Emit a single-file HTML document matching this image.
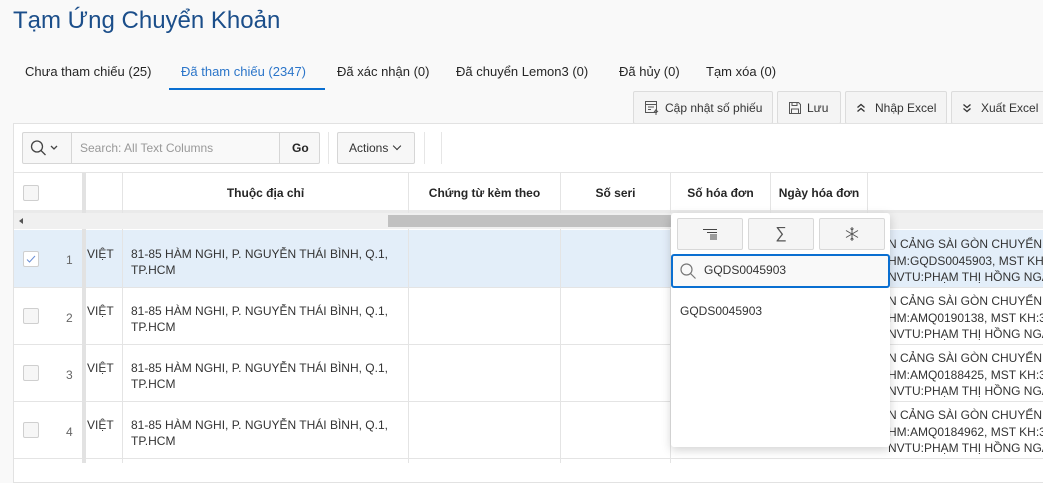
<!DOCTYPE html>
<html><head><meta charset="utf-8"><style>
*{box-sizing:border-box;margin:0;padding:0}
body{width:1043px;height:463px;overflow:hidden;background:#f9f9f9;font-family:"Liberation Sans","DejaVu Sans",sans-serif;color:#262626;position:relative}
.a{position:absolute}
.t{font-size:13px;white-space:nowrap}
.btn{position:absolute;top:91px;height:33px;background:#f4f4f4;border:1px solid #dcdcdc;border-radius:2px;font-size:12px;color:#333;display:flex;align-items:center;padding-left:10px;gap:5px}
.th{position:absolute;top:172px;height:41px;font-size:12px;font-weight:bold;display:flex;align-items:center;justify-content:center;border-right:1px solid #e4e4e4}
.row{position:absolute;left:14px;width:1029px;border-bottom:1px solid #e4e4e4}
.cb{position:absolute;left:9px;width:16px;height:16px;border:1px solid #cfcfcf;border-radius:2px;background:#f6f6f6}
.pb{position:absolute;top:218px;height:32px;width:66px;background:#f5f5f5;border:1px solid #d8d8d8;border-radius:2px;display:flex;align-items:center;justify-content:center;color:#555}
.rt{position:absolute;left:888px;line-height:16.5px;white-space:nowrap;font-size:12px}
</style></head><body>
<div class="a" style="left:13px;top:7px;font-size:24px;color:#1b4e8a">Tạm Ứng Chuyển Khoản</div>
<div class="a t" style="left:25px;top:64px">Chưa tham chiếu (25)</div>
<div class="a t" style="left:181px;top:64px;color:#2b75c9">Đã tham chiếu (2347)</div>
<div class="a" style="left:169px;top:88px;width:156px;height:2px;background:#0a6fd1"></div>
<div class="a t" style="left:337px;top:64px">Đã xác nhận (0)</div>
<div class="a t" style="left:456px;top:64px">Đã chuyển Lemon3 (0)</div>
<div class="a t" style="left:619px;top:64px">Đã hủy (0)</div>
<div class="a t" style="left:706px;top:64px">Tạm xóa (0)</div>

<div class="btn" style="left:633px;width:140px"><svg width="16" height="16" viewBox="0 0 16 16" fill="none" stroke="#555"><rect x="1.5" y="1.5" width="11" height="11"/><path d="M1.5 4.5h11M4 7h6M4 9.5h3M12 9v6M10 12l2-2 2 2"/></svg>Cập nhật số phiếu</div>
<div class="btn" style="left:777px;width:64px"><svg width="14" height="14" viewBox="0 0 14 14" fill="none" stroke="#555"><path d="M1.5 1.5h9l2 2v9h-11z"/><rect x="4" y="1.5" width="5" height="3"/><rect x="3.5" y="8" width="7" height="4.5"/></svg>Lưu</div>
<div class="btn" style="left:845px;width:102px;gap:9px"><svg width="10" height="10" viewBox="0 0 10 10" fill="none" stroke="#333" stroke-width="1.3"><path d="M1.5 4.5 5 1.5 8.5 4.5M1.5 8.5 5 5.5 8.5 8.5"/></svg>Nhập Excel</div>
<div class="btn" style="left:951px;width:100px;gap:9px"><svg width="10" height="10" viewBox="0 0 10 10" fill="none" stroke="#333" stroke-width="1.3"><path d="M1.5 1.5 5 4.5 8.5 1.5M1.5 5.5 5 8.5 8.5 5.5"/></svg>Xuất Excel</div>

<div class="a" style="left:13px;top:123px;width:1040px;height:360px;background:#fff;border:1px solid #e2e2e2"></div>
<div class="a" style="left:22px;top:132px;width:298px;height:32px;border:1px solid #d6d6d6;border-radius:2px;background:#f7f7f7"></div>
<svg class="a" style="left:30px;top:139px" width="30" height="18" viewBox="0 0 30 18" fill="none" stroke="#444" stroke-width="1.3"><circle cx="7" cy="7.5" r="5.5"/><path d="M11 11.5l4.5 4.5M21 7l3 3 3-3"/></svg>
<div class="a" style="left:71px;top:133px;width:209px;height:30px;background:#f9f9f9;border-left:1px solid #d6d6d6;border-right:1px solid #d6d6d6;font-size:12px;color:#999;padding:8px 0 0 8px">Search: All Text Columns</div>
<div class="a" style="left:292px;top:141px;font-size:12px;font-weight:bold">Go</div>
<div class="a" style="left:328px;top:132px;width:1px;height:32px;background:#e6e6e6"></div>
<div class="a" style="left:337px;top:132px;width:78px;height:32px;border:1px solid #d6d6d6;border-radius:2px;background:#f7f7f7;font-size:12px;color:#333;padding:8px 0 0 11px">Actions <span style="display:inline-block;width:6px;height:6px;border-right:1px solid #333;border-bottom:1px solid #333;transform:rotate(45deg);margin:0 0 3px 2px"></span></div>
<div class="a" style="left:424px;top:132px;width:1px;height:32px;background:#e6e6e6"></div>
<div class="a" style="left:441px;top:132px;width:1px;height:32px;background:#e6e6e6"></div>
<div class="a" style="left:14px;top:172px;width:1029px;height:1px;background:#e4e4e4"></div>
<div class="a" style="left:14px;top:173px;width:1029px;height:40px;background:#fff;border-bottom:3px solid #eaeaea"></div>
<div class="cb" style="left:23px;top:185px;width:16px;height:16px"></div>
<div class="a" style="left:82px;top:173px;width:4px;height:290px;background:#e2e2e2"></div>
<div class="a" style="left:122px;top:173px;width:1px;height:290px;background:#e4e4e4"></div>
<div class="th" style="left:123px;width:286px">Thuộc địa chỉ</div>
<div class="th" style="left:409px;width:152px">Chứng từ kèm theo</div>
<div class="th" style="left:561px;width:110px">Số seri</div>
<div class="th" style="left:671px;width:100px">Số hóa đơn</div>
<div class="th" style="left:771px;width:97px">Ngày hóa đơn</div>
<div class="a" style="left:14px;top:213px;width:1029px;height:16px;background:#f0f0f0"></div>
<div class="a" style="left:19px;top:218px;width:0;height:0;border-top:3px solid transparent;border-bottom:3px solid transparent;border-right:4px solid #555"></div>
<div class="a" style="left:388px;top:215px;width:284px;height:12px;background:#c1c1c1"></div>
<div class="row" style="top:230px;height:58px;background:#e3eef9"></div>
<div class="row" style="top:288px;height:57px"></div>
<div class="row" style="top:345px;height:57px"></div>
<div class="row" style="top:402px;height:57px"></div>
<div class="a" style="left:82px;top:229px;width:4px;height:234px;background:#e2e2e2"></div>
<div class="a" style="left:122px;top:229px;width:1px;height:234px;background:#e4e4e4"></div>
<div class="a" style="left:408px;top:229px;width:1px;height:234px;background:#e4e4e4"></div>
<div class="a" style="left:560px;top:229px;width:1px;height:234px;background:#e4e4e4"></div>
<div class="a" style="left:670px;top:229px;width:1px;height:234px;background:#e4e4e4"></div>

<div class="cb" style="left:23px;top:251px;background:#fff"><svg width="14" height="14" viewBox="0 0 14 14" fill="none" stroke="#6b8fd6"><path d="M3 7.5l2.5 2.5L11 4"/></svg></div>
<div class="cb" style="left:23px;top:308px"></div>
<div class="cb" style="left:23px;top:365px"></div>
<div class="cb" style="left:23px;top:422px"></div>

<div style="font-size:12px;color:#333">
<div class="a" style="left:66px;top:253px;color:#666">1</div><div class="a" style="left:87px;top:247px">VIỆT</div>
<div class="a" style="left:131px;top:246px;line-height:16px">81-85 HÀM NGHI, P. NGUYỄN THÁI BÌNH, Q.1,<br>TP.HCM</div>
<div class="a" style="left:66px;top:311px;color:#666">2</div><div class="a" style="left:87px;top:304px">VIỆT</div>
<div class="a" style="left:131px;top:303px;line-height:16px">81-85 HÀM NGHI, P. NGUYỄN THÁI BÌNH, Q.1,<br>TP.HCM</div>
<div class="a" style="left:66px;top:368px;color:#666">3</div><div class="a" style="left:87px;top:361px">VIỆT</div>
<div class="a" style="left:131px;top:360px;line-height:16px">81-85 HÀM NGHI, P. NGUYỄN THÁI BÌNH, Q.1,<br>TP.HCM</div>
<div class="a" style="left:66px;top:425px;color:#666">4</div><div class="a" style="left:87px;top:418px">VIỆT</div>
<div class="a" style="left:131px;top:417px;line-height:16px">81-85 HÀM NGHI, P. NGUYỄN THÁI BÌNH, Q.1,<br>TP.HCM</div>
<div class="rt" style="top:236px">N CẢNG SÀI GÒN CHUYỂN C<br>HM:GQDS0045903, MST KH:3<br>NVTU:PHẠM THỊ HỒNG NGA</div>
<div class="rt" style="top:293px">N CẢNG SÀI GÒN CHUYỂN C<br>HM:AMQ0190138, MST KH:39<br>NVTU:PHẠM THỊ HỒNG NGA</div>
<div class="rt" style="top:350px">N CẢNG SÀI GÒN CHUYỂN C<br>HM:AMQ0188425, MST KH:39<br>NVTU:PHẠM THỊ HỒNG NGA</div>
<div class="rt" style="top:407px">N CẢNG SÀI GÒN CHUYỂN C<br>HM:AMQ0184962, MST KH:39<br>NVTU:PHẠM THỊ HỒNG NGA</div>
</div>
<div class="a" style="left:671px;top:213px;width:219px;height:234px;background:#fff;border-radius:3px;box-shadow:0 3px 10px rgba(0,0,0,.18)"></div>
<div class="pb" style="left:677px"><svg width="16" height="12" viewBox="0 0 16 12" fill="none" stroke="#444"><path d="M1 1.5h14M5 4.5h10M8 7h7M8 9h7M8 11h7"/></svg></div>
<div class="pb" style="left:748px;font-size:16px">∑</div>
<div class="pb" style="left:819px"><svg width="16" height="16" viewBox="0 0 16 16" fill="none" stroke="#555"><path d="M8 1v14M2 4.5l12 7M2 11.5l12-7M6.5 2.5 8 4l1.5-1.5M6.5 13.5 8 12l1.5 1.5"/></svg></div>
<div class="a" style="left:671px;top:254px;width:219px;height:34px;border:2px solid #0a6fd1;border-radius:3px;background:#f9f9f9"></div>
<svg class="a" style="left:679px;top:262px" width="18" height="18" viewBox="0 0 18 18" fill="none" stroke="#777" stroke-width="1.2"><circle cx="7.5" cy="7.5" r="5.5"/><path d="M11.5 11.5l5 5"/></svg>
<div class="a" style="left:704px;top:263px;font-size:12px;color:#333">GQDS0045903</div>
<div class="a" style="left:680px;top:304px;font-size:12px;color:#333">GQDS0045903</div>
</body></html>
